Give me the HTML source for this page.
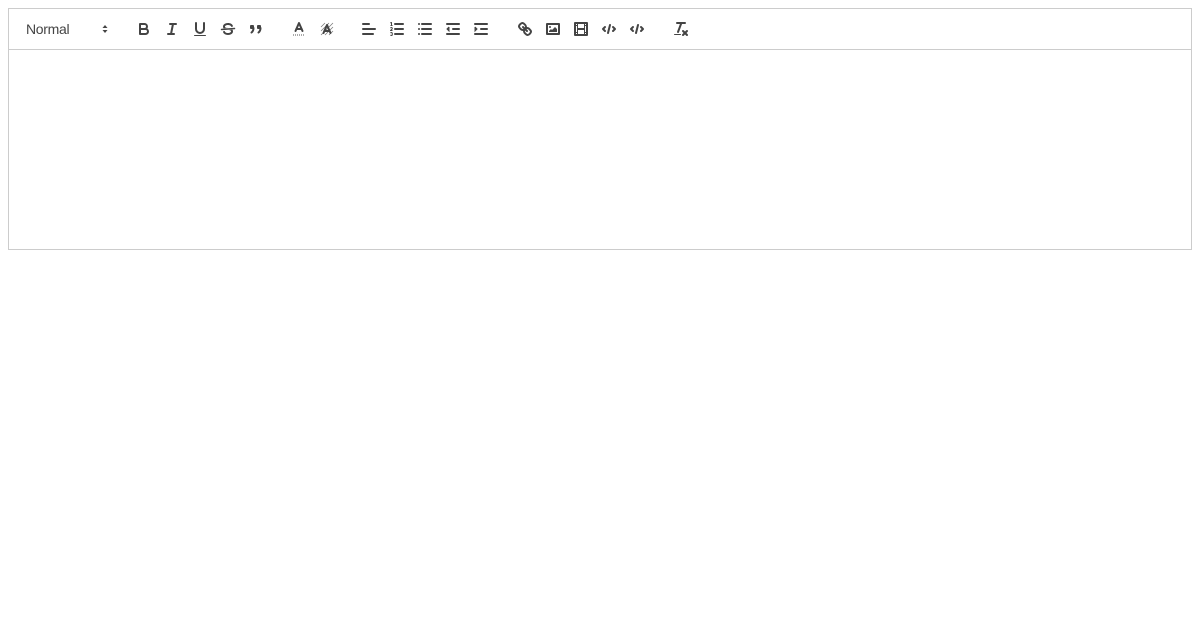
<!DOCTYPE html>
<html><head><style>
body{margin:0;background:#fff;font-family:"Liberation Sans",Helvetica,Arial,sans-serif;}
.wrap{position:absolute;left:8px;top:8px;width:1184px;}
.tb{height:40px;border:1px solid #ccc;position:relative;}
.ed{height:199px;border:1px solid #ccc;border-top:0;}
.lbl{position:absolute;left:17px;top:12px;font-size:14px;color:#444;line-height:17px;letter-spacing:-0.3px}
svg{position:absolute;width:18px;height:18px;top:11px}
.s{fill:none;stroke:#444;stroke-width:2;stroke-linecap:round;stroke-linejoin:round}
.t{fill:none;stroke:#444;stroke-width:1}
.f{fill:#444}
</style></head><body>
<div class="wrap"><div class="tb">
<span class="lbl">Normal</span>
<svg style="left:87px" viewBox="0 0 18 18"><polygon class="f" points="6.5 10 9 13 11.5 10"/><polygon class="f" points="6.5 8 9 5 11.5 8"/></svg>
<svg style="left:126px" viewBox="0 0 18 18"><path class="s" d="M5,4H9.5A2.5,2.5,0,0,1,12,6.5v0A2.5,2.5,0,0,1,9.5,9H5V4Z"/><path class="s" d="M5,9h5.5A2.5,2.5,0,0,1,13,11.5v0A2.5,2.5,0,0,1,10.5,14H5V9Z"/></svg>
<svg style="left:154px" viewBox="0 0 18 18"><line class="s" x1="7" x2="13" y1="4" y2="4"/><line class="s" x1="5" x2="11" y1="14" y2="14"/><line class="s" x1="8" x2="10" y1="14" y2="4"/></svg>
<svg style="left:182px" viewBox="0 0 18 18"><path class="s" d="M5,3V9a4,4,0,0,0,8,0V3"/><rect class="f" height="1" rx="0.5" width="12" x="3" y="15"/></svg>
<svg style="left:210px" viewBox="0 0 18 18"><line class="s" x1="15.5" x2="2.5" y1="8.5" y2="9.5" style="stroke-width:1.5"/><path class="f" d="M9.007,8C6.542,7.791,6,7.519,6,6.5,6,5.792,7.283,5,9,5c1.571,0,2.765.679,2.969,1.309a1,1,0,0,0,1.9-.617C13.356,4.106,11.354,3,9,3,6.2,3,4,4.538,4,6.5a3.2,3.2,0,0,0,.5,1.843Z"/><path class="f" d="M8.984,10C11.457,10.208,12,10.479,12,11.5c0,.708-1.283,1.5-3,1.5-1.571,0-2.765-.679-2.969-1.309a1,1,0,1,0-1.9.617C4.644,13.894,6.646,15,9,15c2.8,0,5-1.538,5-3.5a3.2,3.2,0,0,0-.5-1.843Z"/></svg>
<svg style="left:238px" viewBox="0 0 18 18"><rect class="f" height="4" width="4" x="3" y="5" rx="1"/><rect class="f" height="4" width="4" x="10" y="5" rx="1"/><path class="s" d="M6.5,8c0,3-2,4.5-2,4.5"/><path class="s" d="M13.5,8c0,3-2,4.5-2,4.5"/></svg>
<svg style="left:281px" viewBox="0 0 18 18"><line stroke="#aaa" x1="3" x2="15" y1="15" y2="15" stroke-width="2" stroke-dasharray="1 1"/><polyline class="s" points="5.5 11 9 3 12.5 11"/><line class="s" x1="11.63" x2="6.38" y1="9" y2="9"/></svg>
<svg style="left:309px" viewBox="0 0 18 18"><g stroke="#444" stroke-width="0.8" opacity="0.7"><path d="M3 7l4-4M3 11l8-8M3 15l12-12M7 15l8-8M11 15l4-4"/></g><polyline class="s" points="5.5 13 9 5 12.5 13"/><line class="s" x1="11.63" x2="6.38" y1="11" y2="11"/></svg>
<svg style="left:351px" viewBox="0 0 18 18"><line class="s" x1="3" x2="15" y1="9" y2="9"/><line class="s" x1="3" x2="13" y1="14" y2="14"/><line class="s" x1="3" x2="9" y1="4" y2="4"/></svg>
<svg style="left:379px" viewBox="0 0 18 18"><line class="s" x1="7" x2="15" y1="4" y2="4"/><line class="s" x1="7" x2="15" y1="9" y2="9"/><line class="s" x1="7" x2="15" y1="14" y2="14"/><line class="t" x1="2.5" x2="4.5" y1="5.5" y2="5.5"/><path class="f" d="M3.5,6A0.5,0.5,0,0,1,3,5.5V3.085l-0.276.138A0.5,0.5,0,0,1,2.053,3c-0.124-.247-0.023-0.324.224-0.447l1-.5A0.5,0.5,0,0,1,4,2.5v3A0.5,0.5,0,0,1,3.5,6Z"/><path class="t" d="M4.5,10.5h-2c0-.234,1.850-1.076,1.85-2.234A0.959,0.959,0,0,0,2.5,8.156"/><path class="t" d="M2.5,14.846a0.959,0.959,0,0,0,1.85-.109A0.7,0.7,0,0,0,3.75,14a0.688,0.688,0,0,0,.6-0.736,0.959,0.959,0,0,0-1.85-.109"/></svg>
<svg style="left:407px" viewBox="0 0 18 18"><line class="s" x1="6" x2="15" y1="4" y2="4"/><line class="s" x1="6" x2="15" y1="9" y2="9"/><line class="s" x1="6" x2="15" y1="14" y2="14"/><line class="s" x1="3" x2="3" y1="4" y2="4"/><line class="s" x1="3" x2="3" y1="9" y2="9"/><line class="s" x1="3" x2="3" y1="14" y2="14"/></svg>
<svg style="left:435px" viewBox="0 0 18 18"><line class="s" x1="3" x2="15" y1="14" y2="14"/><line class="s" x1="3" x2="15" y1="4" y2="4"/><line class="s" x1="9" x2="15" y1="9" y2="9"/><polyline class="f" points="5 7 5 11 3 9 5 7" style="stroke:#444;stroke-width:1"/></svg>
<svg style="left:463px" viewBox="0 0 18 18"><line class="s" x1="3" x2="15" y1="14" y2="14"/><line class="s" x1="3" x2="15" y1="4" y2="4"/><line class="s" x1="9" x2="15" y1="9" y2="9"/><polyline class="f" points="3 7 3 11 5 9 3 7" style="stroke:#444;stroke-width:1"/></svg>
<svg style="left:507px" viewBox="0 0 18 18"><line class="s" x1="7" x2="11" y1="7" y2="11"/><path class="s" d="M8.9,4.577a3.476,3.476,0,0,1,.36,4.679A3.476,3.476,0,0,1,4.577,8.9C3.185,7.5,2.035,6.4,4.217,4.217S7.5,3.185,8.9,4.577Z"/><path class="s" d="M13.423,9.1a3.476,3.476,0,0,0-4.679-.36,3.476,3.476,0,0,0,.36,4.679c1.392,1.392,2.500,2.542,4.679.36S14.815,10.5,13.423,9.1Z"/></svg>
<svg style="left:535px" viewBox="0 0 18 18"><rect class="s" height="10" width="12" x="3" y="4"/><circle class="f" cx="6" cy="7" r="1"/><polyline class="f" points="5 12 5 11 7 9 8 10 11 7 13 9 13 12 5 12"/></svg>
<svg style="left:563px" viewBox="0 0 18 18"><rect class="s" height="12" width="12" x="3" y="3"/><rect class="f" height="12" width="1" x="5" y="3"/><rect class="f" height="12" width="1" x="12" y="3"/><rect class="f" height="2" width="8" x="5" y="8"/><rect class="f" height="1" width="3" x="3" y="5"/><rect class="f" height="1" width="3" x="3" y="12"/><rect class="f" height="1" width="3" x="12" y="5"/><rect class="f" height="1" width="3" x="12" y="12"/></svg>
<svg style="left:591px" viewBox="0 0 18 18"><polyline class="s" points="5 7 3 9 5 11"/><polyline class="s" points="13 7 15 9 13 11"/><line class="s" x1="10" x2="8" y1="5" y2="13"/></svg>
<svg style="left:619px" viewBox="0 0 18 18"><polyline class="s" points="5 7 3 9 5 11"/><polyline class="s" points="13 7 15 9 13 11"/><line class="s" x1="10" x2="8" y1="5" y2="13"/></svg>
<svg style="left:663px" viewBox="0 0 18 18"><line class="s" x1="5" x2="13" y1="3" y2="3"/><line class="s" x1="6" x2="9.35" y1="12" y2="3"/><line class="s" x1="11" x2="15" y1="11" y2="15"/><line class="s" x1="15" x2="11" y1="11" y2="15"/><rect class="f" height="1" rx="0.5" width="7" x="2" y="14"/></svg>
</div><div class="ed"></div></div>
</body></html>
